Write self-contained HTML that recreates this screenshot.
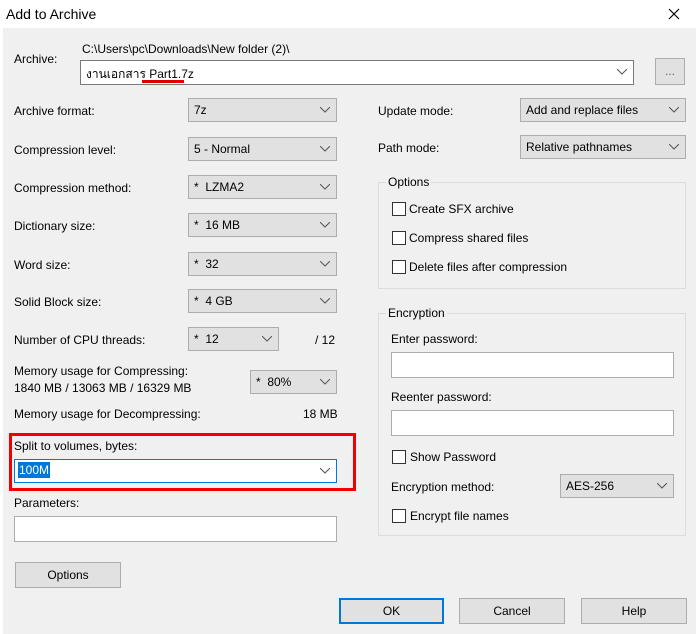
<!DOCTYPE html>
<html><head><meta charset="utf-8"><style>
*{box-sizing:border-box;margin:0;padding:0}
body{width:696px;height:634px;background:#fff;position:relative;overflow:hidden;font-family:"Liberation Sans",Arial,sans-serif;font-size:12px;color:#000}
.bg{position:absolute;left:3px;top:28px;right:0;bottom:0;background:#f0f0f0}
.a{position:absolute;white-space:nowrap}
.cb{position:absolute;height:24px;background:#e1e1e1;border:1px solid #adadad;padding:4px 0 0 5px}
.cb.w{background:#fff;border-color:#7a7a7a}
.cb svg{position:absolute;right:6px;top:8px}
.in{position:absolute;background:#fff;border:1px solid #adadad}
.btn{position:absolute;background:#e1e1e1;border:1px solid #adadad;text-align:center;padding-top:5px}
.grp{position:absolute;border:1px solid #dcdcdc}
.grp span{position:absolute;top:-8px;left:7px;background:#f0f0f0;padding:0 2px}
.ck{position:absolute;width:14px;height:14px;background:#fff;border:1px solid #333}
</style></head><body>
<div class="bg"></div>
<div class="a" style="left:6px;top:6px;font-size:14px">Add to Archive</div>
<svg class="a" style="left:668px;top:8px" width="12" height="12"><path d="M1 1L11 11M11 1L1 11" stroke="#000" stroke-width="1.2"/></svg>

<div class="a" style="left:14px;top:52px">Archive:</div>
<div class="a" style="left:82px;top:42px">C:\Users\pc\Downloads\New folder (2)\</div>
<div class="cb w" style="left:80px;top:60px;width:554px;height:25px;border-color:#7a7a7a">งานเอกสาร Part1.7z<svg width="10" height="6"><path d="M0 0L5 5L10 0" fill="none" stroke="#555"/></svg></div>
<div class="a" style="left:142px;top:80px;width:42px;height:3px;background:#e00000"></div>
<div class="btn" style="left:655px;top:58px;width:30px;height:27px;color:#666">...</div>

<div class="a" style="left:14px;top:104px">Archive format:</div>
<div class="cb" style="left:188px;top:98px;width:149px">7z<svg width="10" height="6"><path d="M0 0L5 5L10 0" fill="none" stroke="#555"/></svg></div>
<div class="a" style="left:14px;top:143px">Compression level:</div>
<div class="cb" style="left:188px;top:137px;width:149px">5 - Normal<svg width="10" height="6"><path d="M0 0L5 5L10 0" fill="none" stroke="#555"/></svg></div>
<div class="a" style="left:14px;top:181px">Compression method:</div>
<div class="cb" style="left:188px;top:175px;width:149px">*&nbsp; LZMA2<svg width="10" height="6"><path d="M0 0L5 5L10 0" fill="none" stroke="#555"/></svg></div>
<div class="a" style="left:14px;top:219px">Dictionary size:</div>
<div class="cb" style="left:188px;top:213px;width:149px">*&nbsp; 16 MB<svg width="10" height="6"><path d="M0 0L5 5L10 0" fill="none" stroke="#555"/></svg></div>
<div class="a" style="left:14px;top:258px">Word size:</div>
<div class="cb" style="left:188px;top:252px;width:149px">*&nbsp; 32<svg width="10" height="6"><path d="M0 0L5 5L10 0" fill="none" stroke="#555"/></svg></div>
<div class="a" style="left:14px;top:295px">Solid Block size:</div>
<div class="cb" style="left:188px;top:289px;width:149px">*&nbsp; 4 GB<svg width="10" height="6"><path d="M0 0L5 5L10 0" fill="none" stroke="#555"/></svg></div>
<div class="a" style="left:14px;top:333px">Number of CPU threads:</div>
<div class="cb" style="left:188px;top:327px;width:91px">*&nbsp; 12<svg width="10" height="6"><path d="M0 0L5 5L10 0" fill="none" stroke="#555"/></svg></div>
<div class="a" style="left:315px;top:333px">/ 12</div>
<div class="a" style="left:14px;top:364px">Memory usage for Compressing:</div>
<div class="a" style="left:14px;top:381px">1840 MB / 13063 MB / 16329 MB</div>
<div class="cb" style="left:250px;top:370px;width:87px">*&nbsp; 80%<svg width="10" height="6"><path d="M0 0L5 5L10 0" fill="none" stroke="#555"/></svg></div>
<div class="a" style="left:14px;top:407px">Memory usage for Decompressing:</div>
<div class="a" style="left:303px;top:407px">18 MB</div>

<div class="a" style="left:9px;top:433px;width:347px;height:58px;border:3px solid #f00000"></div>
<div class="a" style="left:14px;top:439px">Split to volumes, bytes:</div>
<div class="cb w" style="left:14px;top:459px;width:323px;padding:3px 0 0 3px;border-color:#0078d7"><span style="background:#0078d7;color:#fff;padding:1px 1px">100M</span><svg width="10" height="6"><path d="M0 0L5 5L10 0" fill="none" stroke="#555"/></svg></div>
<div class="a" style="left:14px;top:496px">Parameters:</div>
<div class="in" style="left:14px;top:516px;width:323px;height:26px"></div>
<div class="btn" style="left:15px;top:562px;width:106px;height:26px">Options</div>

<div class="a" style="left:378px;top:104px">Update mode:</div>
<div class="cb" style="left:520px;top:98px;width:166px">Add and replace files<svg width="10" height="6"><path d="M0 0L5 5L10 0" fill="none" stroke="#555"/></svg></div>
<div class="a" style="left:378px;top:141px">Path mode:</div>
<div class="cb" style="left:520px;top:135px;width:166px">Relative pathnames<svg width="10" height="6"><path d="M0 0L5 5L10 0" fill="none" stroke="#555"/></svg></div>

<div class="grp" style="left:378px;top:182px;width:308px;height:107px"><span>Options</span></div>
<div class="ck" style="left:392px;top:202px"></div><div class="a" style="left:409px;top:202px">Create SFX archive</div>
<div class="ck" style="left:392px;top:231px"></div><div class="a" style="left:409px;top:231px">Compress shared files</div>
<div class="ck" style="left:392px;top:260px"></div><div class="a" style="left:409px;top:260px">Delete files after compression</div>

<div class="grp" style="left:378px;top:313px;width:308px;height:223px"><span>Encryption</span></div>
<div class="a" style="left:391px;top:332px">Enter password:</div>
<div class="in" style="left:391px;top:352px;width:283px;height:26px"></div>
<div class="a" style="left:391px;top:390px">Reenter password:</div>
<div class="in" style="left:391px;top:410px;width:283px;height:26px"></div>
<div class="ck" style="left:392px;top:450px"></div><div class="a" style="left:410px;top:450px">Show Password</div>
<div class="a" style="left:391px;top:480px">Encryption method:</div>
<div class="cb" style="left:560px;top:474px;width:114px">AES-256<svg width="10" height="6"><path d="M0 0L5 5L10 0" fill="none" stroke="#555"/></svg></div>
<div class="ck" style="left:392px;top:509px"></div><div class="a" style="left:410px;top:509px">Encrypt file names</div>

<div class="btn" style="left:339px;top:598px;width:105px;height:26px;border:2px solid #0078d7;padding-top:4px">OK</div>
<div class="btn" style="left:459px;top:598px;width:106px;height:26px">Cancel</div>
<div class="btn" style="left:581px;top:598px;width:106px;height:26px">Help</div>
</body></html>
